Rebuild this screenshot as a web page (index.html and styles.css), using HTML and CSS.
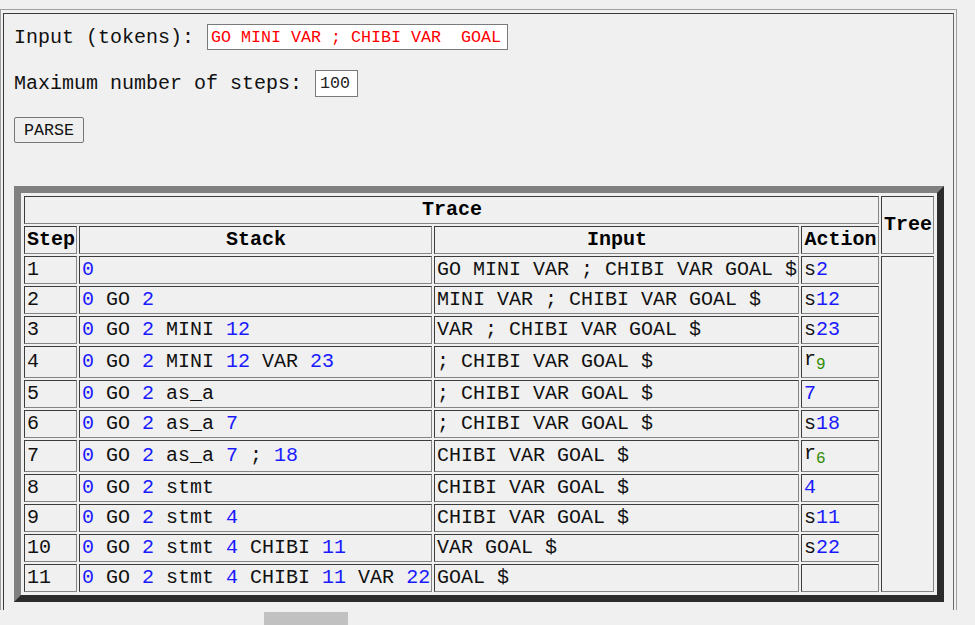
FILE: index.html
```html
<!DOCTYPE html>
<html>
<head>
<meta charset="utf-8">
<title>LR Parser Trace</title>
<link rel="stylesheet" href="styles.css">
</head>
<body>
<div class="viewport">
  <div class="frame-outer">
    <div class="frame-inner">
      <div class="field-row">
        <span class="label">Input (tokens):</span>
        <input class="tokens" type="text" value="GO MINI VAR ; CHIBI VAR  GOAL $">
      </div>
      <div class="field-row second">
        <span class="label">Maximum number of steps:</span>
        <input class="steps" type="text" value="100">
      </div>
      <button class="parse" type="button">PARSE</button>
      <table class="trace">
        <colgroup>
          <col class="c-step"><col class="c-stack"><col class="c-input"><col class="c-action"><col class="c-tree">
        </colgroup>
        <tr><th colspan="4">Trace</th><th rowspan="2">Tree</th></tr>
        <tr><th>Step</th><th>Stack</th><th>Input</th><th>Action</th></tr>
        <tr><td>1</td><td><span class="st">0</span></td><td>GO MINI VAR ; CHIBI VAR GOAL $</td><td>s<span class="st">2</span></td><td rowspan="11"></td></tr>
        <tr><td>2</td><td><span class="st">0</span> GO <span class="st">2</span></td><td>MINI VAR ; CHIBI VAR GOAL $</td><td>s<span class="st">12</span></td></tr>
        <tr><td>3</td><td><span class="st">0</span> GO <span class="st">2</span> MINI <span class="st">12</span></td><td>VAR ; CHIBI VAR GOAL $</td><td>s<span class="st">23</span></td></tr>
        <tr><td>4</td><td><span class="st">0</span> GO <span class="st">2</span> MINI <span class="st">12</span> VAR <span class="st">23</span></td><td>; CHIBI VAR GOAL $</td><td>r<sub class="rule">9</sub></td></tr>
        <tr><td>5</td><td><span class="st">0</span> GO <span class="st">2</span> as_a</td><td>; CHIBI VAR GOAL $</td><td><span class="st">7</span></td></tr>
        <tr><td>6</td><td><span class="st">0</span> GO <span class="st">2</span> as_a <span class="st">7</span></td><td>; CHIBI VAR GOAL $</td><td>s<span class="st">18</span></td></tr>
        <tr><td>7</td><td><span class="st">0</span> GO <span class="st">2</span> as_a <span class="st">7</span> ; <span class="st">18</span></td><td>CHIBI VAR GOAL $</td><td>r<sub class="rule">6</sub></td></tr>
        <tr><td>8</td><td><span class="st">0</span> GO <span class="st">2</span> stmt</td><td>CHIBI VAR GOAL $</td><td><span class="st">4</span></td></tr>
        <tr><td>9</td><td><span class="st">0</span> GO <span class="st">2</span> stmt <span class="st">4</span></td><td>CHIBI VAR GOAL $</td><td>s<span class="st">11</span></td></tr>
        <tr><td>10</td><td><span class="st">0</span> GO <span class="st">2</span> stmt <span class="st">4</span> CHIBI <span class="st">11</span></td><td>VAR GOAL $</td><td>s<span class="st">22</span></td></tr>
        <tr><td>11</td><td><span class="st">0</span> GO <span class="st">2</span> stmt <span class="st">4</span> CHIBI <span class="st">11</span> VAR <span class="st">22</span></td><td>GOAL $</td><td></td></tr>
      </table>
    </div>
  </div>
</div>
<div class="hscroll"><div class="thumb"></div></div>
</body>
</html>
```
FILE: styles.css
```css
html, body {
  margin: 0;
  padding: 0;
  background: #f0f0f0;
  overflow: hidden;
}
body {
  font-family: "Liberation Mono", "Courier New", monospace;
  font-size: 20px;
  color: #111;
}
.viewport {
  height: 610px;
  overflow: hidden;
}
.frame-outer {
  margin-top: 9px;
  width: 957px;
  box-sizing: border-box;
  border: 1px solid #a0a0a0;
  border-bottom: none;
  padding: 3px 2px 0 2px;
}
.frame-inner {
  border: 1px solid;
  border-color: #3a3a3a #6a6a6a #6a6a6a #3a3a3a;
  padding: 10px 9px 40px 10px;
}
.field-row {
  display: flex;
  align-items: center;
  height: 26px;
}
.field-row.second {
  margin-top: 20px;
  height: 27px;
}
.label {
  white-space: pre;
  line-height: 23px;
}
input {
  box-sizing: border-box;
  margin: 0 0 0 13px;
  border: 1px solid #7a7a7a;
  background: #fff;
  font-family: "Liberation Mono", "Courier New", monospace;
  font-size: 16.67px;
  outline: none;
}
.tokens {
  width: 301px;
  height: 26px;
  padding: 0 3px;
  color: #ff0000;
}
.steps {
  width: 43px;
  height: 27px;
  padding: 0 4px;
  color: #222;
}
.parse {
  display: block;
  margin-top: 20px;
  width: 70px;
  height: 26px;
  padding: 0;
  box-sizing: border-box;
  border: 1px solid #767676;
  border-radius: 2px;
  background: #efefef;
  color: #111;
  font-family: "Liberation Mono", "Courier New", monospace;
  font-size: 16.67px;
}
.trace {
  margin-top: 43px;
  width: 930px;
  table-layout: fixed;
  border-collapse: separate;
  border-spacing: 2px;
  padding: 1px;
  border: 7px solid;
  border-color: #808080 #2b2b2b #2b2b2b #808080;
}
.c-step { width: 53px; }
.c-stack { width: 353px; }
.c-input { width: 365px; }
.c-action { width: 78px; }
.c-tree { width: 53px; }
.trace th, .trace td {
  border: 1px solid;
  border-color: #3c3c3c #858585 #858585 #3c3c3c;
  padding: 1px 1px 2px 2px;
  line-height: 23px;
  white-space: nowrap;
  text-align: left;
  vertical-align: middle;
  font-size: 20px;
}
.trace th {
  font-weight: bold;
  color: #000;
  text-align: center;
}
.st {
  color: #1a1aff;
}
.rule {
  color: #2f8a00;
  font-size: 16px;
  line-height: 20px;
  vertical-align: -4px;
}
.hscroll {
  height: 13px;
  padding-top: 2px;
}
.thumb {
  margin-left: 264px;
  width: 84px;
  height: 13px;
  background: #c1c1c1;
}
```
